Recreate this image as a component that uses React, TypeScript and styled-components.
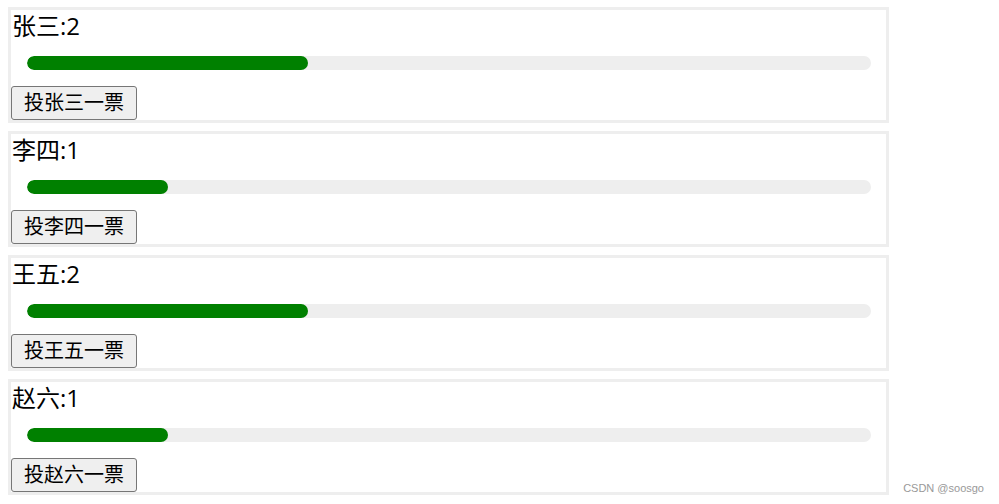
import React from 'react';
import styled, { createGlobalStyle } from 'styled-components';

const GlobalStyle = createGlobalStyle`
  html, body {
    margin: 0;
    padding: 0;
    background: #fff;
  }
  body {
    font-family: "Open Sans", "Noto Sans CJK SC", sans-serif;
    color: #000;
  }
`;

const Page = styled.main`
  position: relative;
  width: 999px;
  height: 504px;
  padding: 7px 8px 0;
  box-sizing: border-box;
  overflow: hidden;
`;

const List = styled.div`
  display: flex;
  flex-direction: column;
  gap: 8px;
  width: 881px;
`;

const Card = styled.section`
  border: 3px solid #eee;
  display: flex;
  flex-direction: column;
  align-items: flex-start;
`;

const Title = styled.div`
  font-size: 24px;
  line-height: 30px;
  padding: 1px 0 0 1px;
`;

const Track = styled.div`
  align-self: stretch;
  height: 14px;
  margin: 15px 15px 16px 16px;
  border-radius: 7px;
  background: #eee;
  overflow: hidden;
`;

const Fill = styled.div`
  height: 100%;
  border-radius: 7px;
  background: green;
`;

const VoteButton = styled.button`
  font-family: "Open Sans", "Noto Sans CJK SC", sans-serif;
  font-size: 20px;
  line-height: 26px;
  height: 34px;
  padding: 3px 12px;
  border: 1px solid #767676;
  border-radius: 3px;
  background: #efefef;
  color: #000;
  cursor: pointer;
`;

const Watermark = styled.span`
  position: absolute;
  right: 15px;
  bottom: 10px;
  font-family: "Liberation Sans", sans-serif;
  font-size: 11px;
  color: #999;
`;

const candidates = [
  { name: '张三', votes: 2 },
  { name: '李四', votes: 1 },
  { name: '王五', votes: 2 },
  { name: '赵六', votes: 1 },
];

export default function App() {
  const total = candidates.reduce((s, c) => s + c.votes, 0);
  return (
    <>
      <GlobalStyle />
      <Page>
        <List>
          {candidates.map((c) => (
            <Card key={c.name}>
              <Title>{c.name}:{c.votes}</Title>
              <Track>
                <Fill style={{ width: `${(c.votes / total) * 100}%` }} />
              </Track>
              <VoteButton>投{c.name}一票</VoteButton>
            </Card>
          ))}
        </List>
        <Watermark>CSDN @soosgo</Watermark>
      </Page>
    </>
  );
}
